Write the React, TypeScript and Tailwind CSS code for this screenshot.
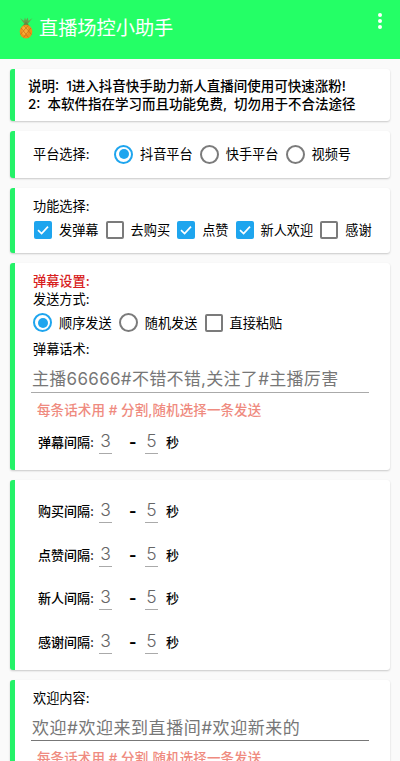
import React from 'react';

const FONT = 'font-[Inter,"Noto_Sans_CJK_SC",sans-serif]';

const Pineapple = () => (
  <svg width="14" height="22" viewBox="0 0 14 22" className="ml-[2px] shrink-0">
    <path d="M7 9 L1 1 L5 4 L6 0.5 L7 3.5 L8.5 0.5 L9.5 4 L13.5 1 Z" fill="#6f9a4c" />
    <path d="M3.5 9 L7 4.5 L10.5 9 Z" fill="#5d8f3f" />
    <ellipse cx="7" cy="14.6" rx="6.3" ry="6.9" fill="#ee8f1c" />
    <ellipse cx="6" cy="13.6" rx="3.2" ry="4.6" fill="#f8ad36" />
    <path
      d="M2.2 11 L9.5 20.6 M5 8.6 L12.6 17.6 M11.8 11 L4.5 20.6 M9 8.6 L1.4 17.6"
      stroke="#c56a12"
      strokeWidth="0.7"
      fill="none"
    />
  </svg>
);

const Radio = ({ on }: { on?: boolean }) => (
  <span
    className={`flex h-[19px] w-[19px] shrink-0 items-center justify-center rounded-full border-2 ${
      on ? 'border-[#1ea5ee]' : 'border-[#7b7b7b]'
    }`}
  >
    {on && <span className="h-[10px] w-[10px] rounded-full bg-[#1ea5ee]" />}
  </span>
);

const Check = ({ on }: { on?: boolean }) =>
  on ? (
    <span className="flex h-[18px] w-[18px] shrink-0 items-center justify-center rounded-[2px] bg-[#1ea5ee]">
      <svg width="14" height="14" viewBox="0 0 14 14">
        <path d="M2 7.2 L5.6 10.6 L12 3.6" stroke="#fff" strokeWidth="1.7" fill="none" />
      </svg>
    </span>
  ) : (
    <span className="h-[18px] w-[18px] shrink-0 rounded-[2px] border-2 border-[#7b7b7b]" />
  );

const Card = ({ className, children }: { className: string; children: React.ReactNode }) => (
  <div
    className={`mx-[10px] mb-[10px] rounded-[3px] border-l-[5px] border-l-[#24f268] bg-white shadow-[0_1px_2px_rgba(0,0,0,0.2)] ${className}`}
  >
    {children}
  </div>
);

const Interval = ({ label, className }: { label: string; className?: string }) => (
  <div className={`flex h-[24px] items-start text-[13px] font-medium leading-[18px] text-black ${className ?? ''}`}>
    <span className="w-[61px] shrink-0">{label}</span>
    <span className="-mt-[2px] w-[13px] border-b border-[#aaa] pb-[2px] text-center text-[17.5px] font-light leading-[20px] text-[#666]">3</span>
    <span className="ml-[17px] w-[9px] text-[16px] font-bold">-</span>
    <span className="-mt-[2px] ml-[7px] w-[13px] border-b border-[#aaa] pb-[2px] text-center text-[17.5px] font-light leading-[20px] text-[#666]">5</span>
    <span className="ml-[8px]">秒</span>
  </div>
);

const Hint = ({ className }: { className?: string }) => (
  <div className={`text-[13.5px] font-medium leading-[18px] tracking-[0.1px] text-[#ef8b80] ${className ?? ''}`}>
    每条话术用 # 分割,随机选择一条发送
  </div>
);

export default function App() {
  return (
    <div className={`h-[761px] w-[400px] overflow-hidden bg-[#fafafa] ${FONT}`}>
      <div className="mb-[10px] flex h-[59px] items-start bg-[#24ff66] pl-[17px] pr-[18px] pt-[17px]">
        <Pineapple />
        <span className="ml-[6px] text-[19.2px] leading-[23px] text-white">直播场控小助手</span>
        <div className="ml-auto flex -translate-y-[4px] flex-col gap-[2px]">
          <span className="h-[4px] w-[4px] rounded-full bg-white" />
          <span className="h-[4px] w-[4px] rounded-full bg-white" />
          <span className="h-[4px] w-[4px] rounded-full bg-white" />
        </div>
      </div>

      <Card className="h-[52px] pl-[13px] pt-[8px] text-[13.5px] font-medium leading-[18px] text-black [word-spacing:3.5px]">
        <div className="whitespace-nowrap">说明: 1进入抖音快手助力新人直播间使用可快速涨粉!</div>
        <div className="whitespace-nowrap">2: 本软件指在学习而且功能免费, 切勿用于不合法途径</div>
      </Card>

      <Card className="flex h-[47px] items-center whitespace-nowrap pl-[18px] text-[13.2px] text-black">
        <span className="w-[81px]">平台选择:</span>
        <div className="flex items-center gap-[7px]">
          <Radio on />
          <span>抖音平台</span>
          <Radio />
          <span>快手平台</span>
          <Radio />
          <span>视频号</span>
        </div>
      </Card>

      <Card className="h-[65px] whitespace-nowrap pl-[18px] pt-[9px] text-[13.2px] leading-[18px] text-black">
        <div>功能选择:</div>
        <div className="mt-[6px] flex items-center gap-[7px] pl-[1px]">
          <Check on />
          <span>发弹幕</span>
          <Check />
          <span>去购买</span>
          <Check on />
          <span>点赞</span>
          <Check on />
          <span>新人欢迎</span>
          <Check />
          <span>感谢</span>
        </div>
      </Card>

      <Card className="h-[207px] whitespace-nowrap pl-[18px] pt-[9px] text-[13.2px] leading-[18px] text-black">
        <div className="font-medium text-[#d81e1e]">弹幕设置:</div>
        <div>发送方式:</div>
        <div className="mt-[5px] flex h-[19px] items-center gap-[7px]">
          <Radio on />
          <span>顺序发送</span>
          <Radio />
          <span>随机发送</span>
          <Check />
          <span>直接粘贴</span>
        </div>
        <div className="mt-[8px]">弹幕话术:</div>
        <div className="mt-[10px] w-[338px] -translate-x-[2px] border-b-[1.5px] border-[#aaa] pb-[1px] pl-[1px] text-[17px] leading-[23px] tracking-[0.3px] text-[#777]">
          主播66666#不错不错,关注了#主播厉害
        </div>
        <Hint className="ml-[4px] mt-[8px]" />
        <Interval label="弹幕间隔:" className="ml-[5px] mt-[14px]" />
      </Card>

      <Card className="h-[190px] pl-[23px] pt-[22px] whitespace-nowrap">
        <Interval label="购买间隔:" />
        <Interval label="点赞间隔:" className="mt-[19.6px]" />
        <Interval label="新人间隔:" className="mt-[19.6px]" />
        <Interval label="感谢间隔:" className="mt-[19.6px]" />
      </Card>

      <Card className="h-[90px] whitespace-nowrap pl-[18px] pt-[9px] text-[13.2px] leading-[18px] text-black">
        <div>欢迎内容:</div>
        <div className="mt-[10px] w-[338px] -translate-x-[2px] border-b-[1.5px] border-[#777] pl-[1px] text-[17px] leading-[23px] tracking-[0.55px] text-[#777]">
          欢迎#欢迎来到直播间#欢迎新来的
        </div>
        <Hint className="ml-[4px] mt-[8px]" />
      </Card>
    </div>
  );
}
